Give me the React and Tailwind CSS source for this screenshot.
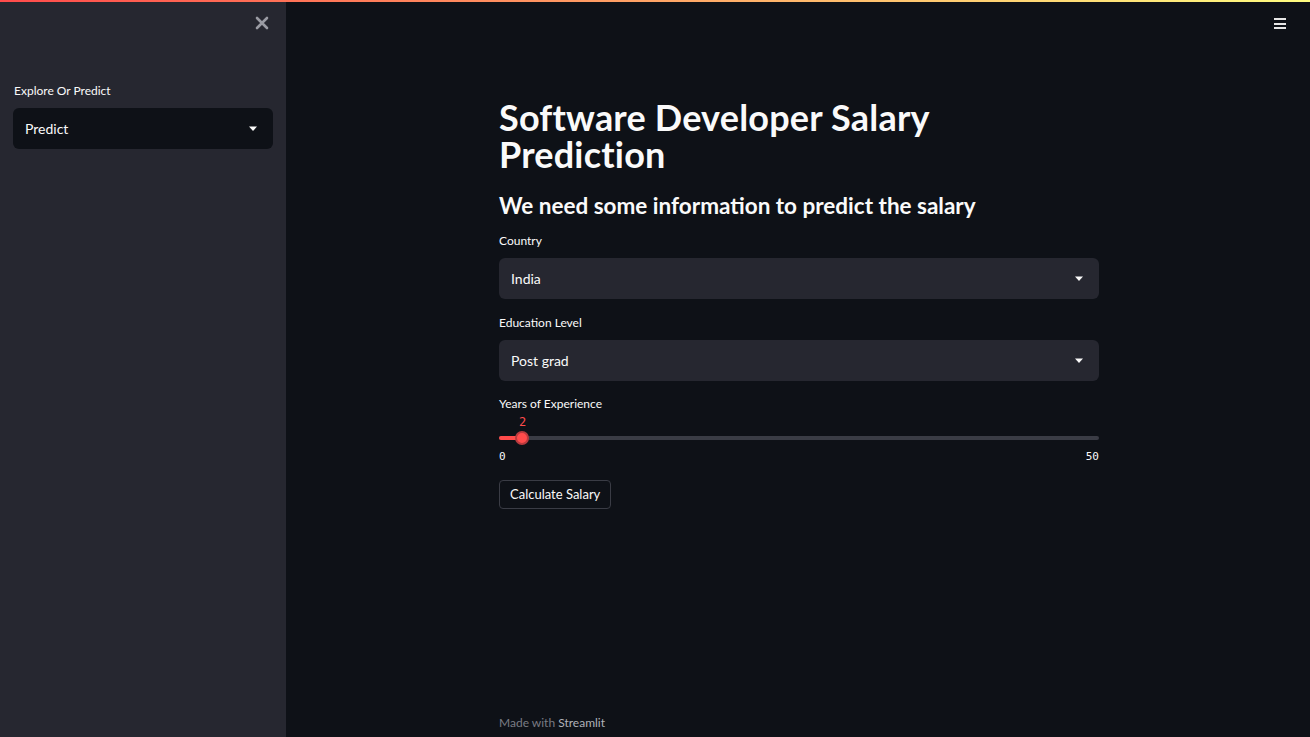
import React from "react";

const font = { fontFamily: '"Lato", "Open Sans", sans-serif' };
const mono = { fontFamily: '"DejaVu Sans Mono", monospace' };

function Caret() {
  return (
    <svg width="10" height="6" viewBox="0 0 10 6" className="shrink-0">
      <path d="M1 0.5 L9 0.5 L5 5 Z" fill="#fafafa" />
    </svg>
  );
}

function Select({ value, bg }) {
  return (
    <div className={`flex items-center justify-between h-[41px] rounded-[6px] pl-3 pr-[15px] ${bg}`}>
      <span className="text-[14px] text-[#fafafa]">{value}</span>
      <Caret />
    </div>
  );
}

export default function App() {
  return (
    <div className="w-[1310px] h-[737px] flex flex-col bg-[#0e1117] overflow-hidden text-[#fafafa]" style={font}>
      <div className="h-[2px] w-full bg-[linear-gradient(90deg,#ff4b4b,#fffd80)]" />
      <div className="flex flex-1 min-h-0">
        <aside className="w-[286px] shrink-0 bg-[#262730] flex flex-col px-[13px]">
          <div className="flex justify-end pt-[14px] pr-[4px]">
            <svg width="14" height="14" viewBox="0 0 14 14">
              <path d="M2 2 L12 12 M12 2 L2 12" stroke="#9a9ba3" strokeWidth="2.6" strokeLinecap="round" />
            </svg>
          </div>
          <div className="mt-[53px] text-[12px] leading-[16px] text-[#fafafa] pl-[1px]">Explore Or Predict</div>
          <div className="mt-[9px] w-[260px]">
            <Select value="Predict" bg="bg-[#0e1117]" />
          </div>
        </aside>
        <main className="flex-1 flex flex-col relative">
          <div className="absolute right-[24px] top-[16px] flex flex-col gap-[2.5px]">
            <div className="w-[12px] h-[2px] bg-[#e6e6e6]" />
            <div className="w-[12px] h-[2px] bg-[#e6e6e6]" />
            <div className="w-[12px] h-[2px] bg-[#e6e6e6]" />
          </div>
          <div className="w-[600px] ml-[213px] flex flex-col flex-1">
            <h1 className="mt-[97px] text-[36px] leading-[37px] font-bold tracking-[0.2px]">
              Software Developer Salary
              <br />
              Prediction
            </h1>
            <h2 className="mt-[18px] text-[22.5px] leading-[30px] font-bold">
              We need some information to predict the salary
            </h2>
            <div className="mt-[12px] text-[12px] leading-[16px]">Country</div>
            <div className="mt-[9px]">
              <Select value="India" bg="bg-[#262730]" />
            </div>
            <div className="mt-[16px] text-[12px] leading-[16px]">Education Level</div>
            <div className="mt-[9px]">
              <Select value="Post grad" bg="bg-[#262730]" />
            </div>
            <div className="mt-[15px] text-[12px] leading-[16px]">Years of Experience</div>
            <div className="relative h-[50px] mt-[2px]">
              <div className="absolute left-[20px] top-[1px] text-[12px] leading-[14px] text-[#ff4b4b]" style={mono}>2</div>
              <div className="absolute left-0 right-0 top-[22px] h-[4px] rounded-full bg-[#3a3c45]" />
              <div className="absolute left-0 w-[24px] top-[22px] h-[4px] rounded-full bg-[#ff4b4b]" />
              <div className="absolute left-[16px] top-[17px] w-[14px] h-[14px] rounded-full bg-[#ff4b4b] border-2 border-[#b83a3e]" />
              <div className="absolute left-0 top-[36px] text-[11px] leading-[14px] text-[#fafafa]" style={mono}>0</div>
              <div className="absolute right-0 top-[36px] text-[11px] leading-[14px] text-[#fafafa]" style={mono}>50</div>
            </div>
            <div className="mt-[16px]">
              <button className="h-[29px] px-[10px] rounded-[4px] border border-[#3a3c45] bg-[#0e1117] text-[13px] text-[#fafafa]">
                Calculate Salary
              </button>
            </div>
            <div className="mt-auto pb-[5px] text-[12px] text-[#7a7c84]">
              Made with <span className="text-[#b0b2b8]">Streamlit</span>
            </div>
          </div>
        </main>
      </div>
    </div>
  );
}
